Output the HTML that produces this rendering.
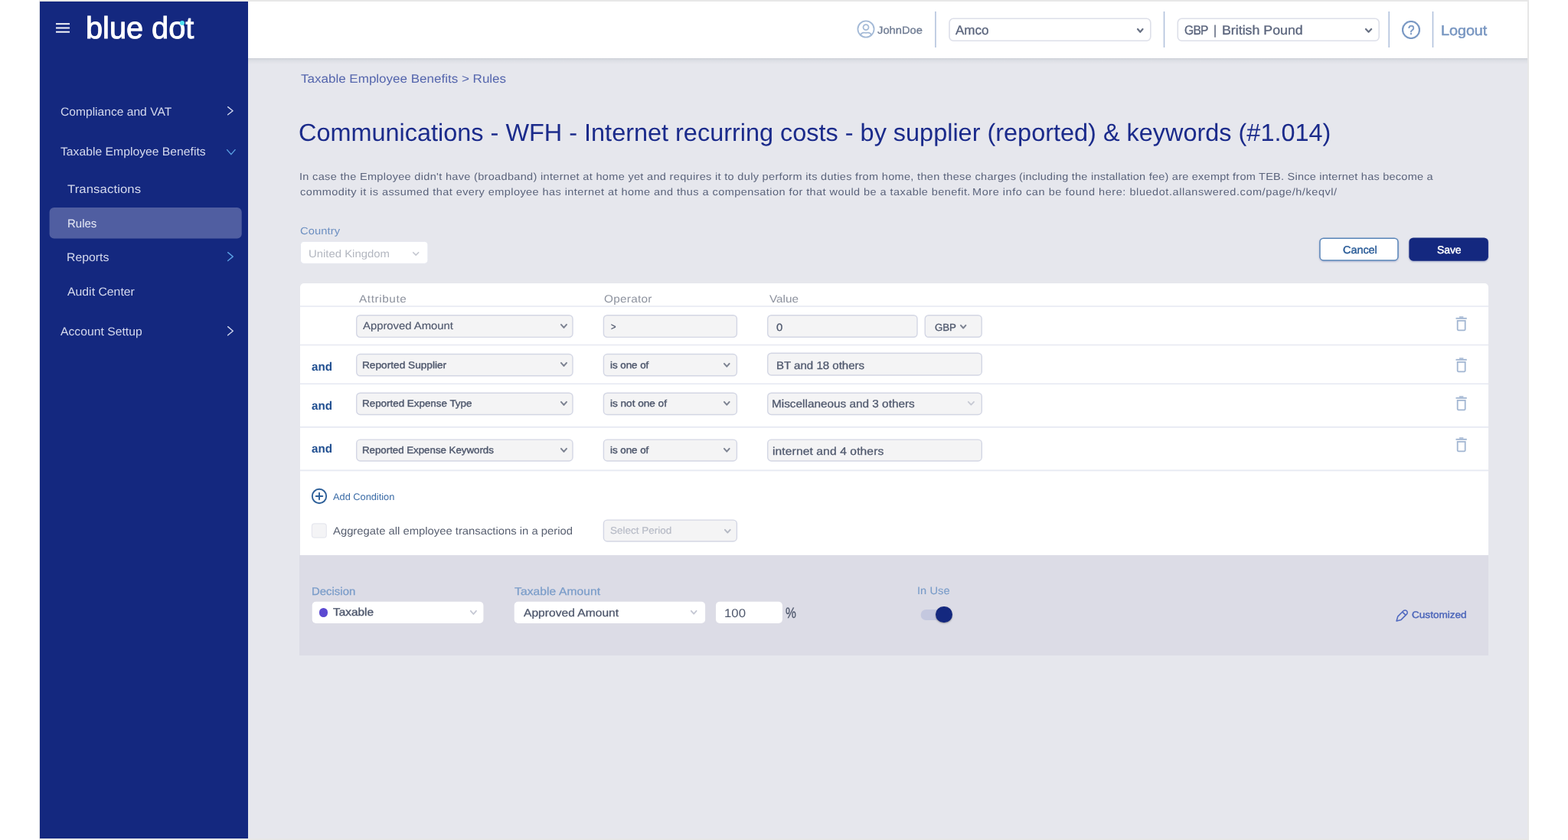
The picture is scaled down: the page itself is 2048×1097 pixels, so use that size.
<!DOCTYPE html>
<html lang="en">
<head>
<meta charset="utf-8">
<title>blue dot - Taxable Employee Benefits - Rules</title>
<style>
*{box-sizing:border-box}
html,body{margin:0;padding:0}
body{width:2048px;height:1097px;position:relative;overflow:hidden;background:#fff;font-family:"Liberation Sans", sans-serif}
main,header,aside{position:absolute;left:0;top:0;width:2048px;height:1097px;display:block;will-change:transform}
ul,li,p,h1,form,fieldset{margin:0;padding:0;border:0;list-style:none;font-weight:400}
a{color:inherit;text-decoration:none}
button{all:unset}
.b{position:absolute;display:block;margin:0;padding:0}
.t{position:absolute;display:block;margin:0;padding:0;white-space:nowrap;font-weight:400;text-rendering:geometricPrecision;transform-origin:0 0}
.in{background:#f4f4f5;border:1px solid #d4d7e5;border-radius:5px;box-shadow:inset 0 0 0 1px rgba(212,215,229,.38)}
.wh{background:#fff;border-radius:5px}
.hs{background:#fff;border:1.5px solid #dadded;border-radius:6px}
</style>
</head>
<body>
<div class="b" style="left:51px;top:0px;width:1946px;height:1097px;background:#e7e7e7"></div>
<div class="b" style="left:52px;top:2px;width:1943px;height:1093px;background:#e6e7ed"></div>
<main>
<nav aria-label="Breadcrumb">
<span class="t" style="left:393px;top:94px;font-size:15.66px;line-height:20px;transform:scaleX(1.0866);color:#5566ad;">Taxable Employee Benefits &gt; Rules</span>
</nav>
<h1 class="t" style="left:390px;top:153px;font-size:32.0px;line-height:40px;letter-spacing:-0.004px;transform:scaleX(1.0139);color:#1b2b8b;">Communications - WFH - Internet recurring costs - by supplier (reported) &amp; keywords (#1.014)</h1>
<p>
<span class="t" style="left:391px;top:222px;font-size:13.18px;line-height:17px;letter-spacing:0.303px;transform:scaleX(1.1000);color:#5b647c;">In case the Employee didn&#x27;t have (broadband) internet at home yet and requires it to duly perform its duties from home, then these charges </span><span class="t" style="left:1331px;top:222px;font-size:13.18px;line-height:17px;letter-spacing:0.225px;transform:scaleX(1.1000);color:#5b647c;">(including the installation fee) are exempt from TEB. Since internet has become a</span><span class="t" style="left:392px;top:242px;font-size:13.18px;line-height:17px;letter-spacing:0.401px;transform:scaleX(1.1000);color:#5b647c;">commodity it is assumed that every employee has internet at home and thus a compensation for that would be a taxable benefit. </span><span class="t" style="left:1270px;top:242px;font-size:13.18px;line-height:17px;letter-spacing:0.508px;transform:scaleX(1.1000);color:#5b647c;">More info can be found here: bluedot.allanswered.com/page/h/keqvl/</span>
</p>
<div role="toolbar">
<label>
<span class="t" style="left:392px;top:293px;font-size:13.37px;line-height:17px;letter-spacing:0.103px;transform:scaleX(1.1000);color:#6c8fc1;">Country</span>
</label>
<div role="combobox" aria-label="Country">
<svg class="b" style="left:392px;top:314px" width="168" height="31" viewBox="0 0 168 31"><rect x="0.50" y="1.30" width="166.40" height="29.00" rx="4.50" fill="#ffffff" stroke="#e4e6ee" stroke-width="1"/></svg>
<span class="t" style="left:403px;top:323px;font-size:13.75px;line-height:18px;letter-spacing:-0.008px;transform:scaleX(1.0839);color:#b3b7c0;">United Kingdom</span>
<svg class="b" style="left:535.60px;top:326.30px" width="14.4" height="10.9" viewBox="0 0 14.4 10.9" fill="none" ><path d="M3.72 3.72 L7.20 7.18 L10.68 3.72" stroke="#c4c7d0" stroke-width="1.6" stroke-linecap="round" stroke-linejoin="round"/></svg>
</div>
<button type="button">
<svg class="b" style="left:1719px;top:306px;filter:drop-shadow(0 1px 1.2px rgba(20,40,128,.28))" width="112" height="39" viewBox="0 0 112 39"><rect x="4.95" y="5.15" width="102.00" height="28.80" rx="4.75" fill="#ffffff" stroke="#5a86b9" stroke-width="1.5"/></svg>
<span class="t" style="left:1754px;top:317px;font-size:13.94px;line-height:18px;letter-spacing:-0.045px;-webkit-text-stroke:0.45px;transform:scaleX(1.0383);color:#2a5c98;">Cancel</span>
</button>
<button type="submit">
<svg class="b" style="left:1836px;top:306px;filter:drop-shadow(0 1px 1.2px rgba(20,40,128,.35))" width="112" height="39" viewBox="0 0 112 39"><rect x="4.40" y="4.40" width="103.50" height="30.30" rx="5.50" fill="#14287f"/></svg>
<span class="t" style="left:1877px;top:317px;font-size:13.94px;line-height:18px;letter-spacing:-0.093px;-webkit-text-stroke:0.45px;transform:scaleX(1.0017);color:#ffffff;">Save</span>
</button>
</div>
<section aria-label="Conditions">
<div class="b" style="left:392px;top:370px;width:1552px;height:355px;background:#fff;border-radius:5px 5px 0 0"></div>
<div role="row">
<span class="t" style="left:469px;top:381px;font-size:13.94px;line-height:18px;letter-spacing:0.533px;transform:scaleX(1.1000);color:#8d929e;">Attribute</span><span class="t" style="left:789px;top:381px;font-size:13.94px;line-height:18px;letter-spacing:0.248px;transform:scaleX(1.1000);color:#8d929e;">Operator</span><span class="t" style="left:1005px;top:381px;font-size:13.94px;line-height:18px;letter-spacing:0.017px;transform:scaleX(1.0982);color:#8d929e;">Value</span>
</div>
<hr class="b" style="left:392px;top:399px;width:1552px;height:2px;border:0;background:linear-gradient(#eceef5 0px 1px,#eceef5 1px 2px)">
<hr class="b" style="left:392px;top:449px;width:1552px;height:3px;border:0;background:linear-gradient(#fafafc 0px 1px,#e4e7f1 1px 2px,#fafafc 2px 3px)">
<hr class="b" style="left:392px;top:500px;width:1552px;height:2px;border:0;background:linear-gradient(#f4f5f9 0px 1px,#e4e7f1 1px 2px)">
<hr class="b" style="left:392px;top:556px;width:1552px;height:3px;border:0;background:linear-gradient(#fcfdfe 0px 1px,#e6e9f2 1px 2px,#eef0f6 2px 3px)">
<hr class="b" style="left:392px;top:613px;width:1552px;height:3px;border:0;background:linear-gradient(#f2f4f8 0px 1px,#e6e9f2 1px 2px,#f8f8fb 2px 3px)">
<div role="row">
<div role="combobox" aria-label="Attribute">
<svg class="b" style="left:465px;top:411px" width="284" height="31" viewBox="0 0 284 31"><rect x="0.70" y="0.70" width="282.30" height="28.70" rx="4.80" fill="#f4f4f5" stroke="#d3d6e4" stroke-width="1.4"/></svg>
<span class="t" style="left:474px;top:417px;font-size:13.75px;line-height:18px;letter-spacing:0.004px;-webkit-text-stroke:0.15px;transform:scaleX(1.0788);color:#4f586d;">Approved Amount</span>
<svg class="b" style="left:729.10px;top:419.75px" width="14.9" height="11.8" viewBox="0 0 14.9 11.8" fill="none" ><path d="M3.90 3.90 L7.45 7.90 L11.00 3.90" stroke="#7d8392" stroke-width="2.0" stroke-linecap="round" stroke-linejoin="round"/></svg>
</div>
<div role="combobox" aria-label="Operator">
<svg class="b" style="left:787px;top:411px" width="177" height="31" viewBox="0 0 177 31"><rect x="1.40" y="0.70" width="174.00" height="28.70" rx="4.80" fill="#f4f4f5" stroke="#d3d6e4" stroke-width="1.4"/></svg>
<span class="t" style="left:798px;top:419px;font-size:12.8px;line-height:16px;-webkit-text-stroke:0.3px;transform:scaleX(0.8766);color:#4f586d;">&gt;</span>
</div>
<div role="textbox" aria-label="Value">
<svg class="b" style="left:1002px;top:411px" width="197" height="30" viewBox="0 0 197 30"><rect x="0.70" y="0.70" width="195.30" height="28.60" rx="4.80" fill="#f4f4f5" stroke="#d3d6e4" stroke-width="1.4"/></svg>
<span class="t" style="left:1014px;top:419px;font-size:13.56px;line-height:17px;-webkit-text-stroke:0.3px;transform:scaleX(1.0953);color:#4f586d;">0</span>
</div>
<div role="combobox" aria-label="Currency">
<svg class="b" style="left:1207px;top:411px" width="76" height="30" viewBox="0 0 76 30"><rect x="1.20" y="0.70" width="74.00" height="28.60" rx="4.80" fill="#f4f4f5" stroke="#d3d6e4" stroke-width="1.4"/></svg>
<span class="t" style="left:1221px;top:419px;font-size:13.18px;line-height:17px;letter-spacing:-0.058px;-webkit-text-stroke:0.3px;transform:scaleX(1.0109);color:#4f586d;">GBP</span>
<svg class="b" style="left:1251.00px;top:421.20px" width="14.3" height="11.4" viewBox="0 0 14.3 11.4" fill="none" ><path d="M3.90 3.90 L7.15 7.50 L10.40 3.90" stroke="#7d8392" stroke-width="2.0" stroke-linecap="round" stroke-linejoin="round"/></svg>
</div>
<button type="button" aria-label="Delete condition">
<svg class="b" style="left:1899.00px;top:410.70px" width="20" height="24" viewBox="0 0 20 24" fill="none" ><path d="M2.5 4.8 H16.8" stroke="#a2b6d2" stroke-width="1.9"/><path d="M7 3 H12.4" stroke="#a2b6d2" stroke-width="1.5"/><path d="M4.7 7.8 H14.7 V19.1 a1.2 1.2 0 0 1 -1.2 1.2 H5.9 a1.2 1.2 0 0 1 -1.2 -1.2 Z" stroke="#a2b6d2" stroke-width="1.8" stroke-linejoin="miter"/></svg>
</button>
</div>
<div role="row">
<span class="t" style="left:407px;top:470px;font-size:15.47px;line-height:20px;letter-spacing:-0.016px;font-weight:700;transform:scaleX(0.9787);color:#1f4e90;">and</span>
<div role="combobox" aria-label="Attribute">
<svg class="b" style="left:465px;top:461px" width="284" height="31" viewBox="0 0 284 31"><rect x="0.70" y="1.50" width="282.30" height="28.30" rx="4.80" fill="#f4f4f5" stroke="#d3d6e4" stroke-width="1.4"/></svg>
<span class="t" style="left:473px;top:469px;font-size:12.6px;line-height:16px;letter-spacing:-0.002px;-webkit-text-stroke:0.4px;transform:scaleX(1.0857);color:#4f586d;">Reported Supplier</span>
<svg class="b" style="left:729.10px;top:470.35px" width="14.9" height="11.8" viewBox="0 0 14.9 11.8" fill="none" ><path d="M3.90 3.90 L7.45 7.90 L11.00 3.90" stroke="#7d8392" stroke-width="2.0" stroke-linecap="round" stroke-linejoin="round"/></svg>
</div>
<div role="combobox" aria-label="Operator">
<svg class="b" style="left:787px;top:461px" width="177" height="31" viewBox="0 0 177 31"><rect x="1.40" y="1.50" width="174.00" height="28.30" rx="4.80" fill="#f4f4f5" stroke="#d3d6e4" stroke-width="1.4"/></svg>
<span class="t" style="left:797px;top:469px;font-size:12.6px;line-height:16px;letter-spacing:-0.043px;-webkit-text-stroke:0.4px;transform:scaleX(1.0631);color:#4f586d;">is one of</span>
<svg class="b" style="left:942.20px;top:470.65px" width="14.55" height="11.6" viewBox="0 0 14.55 11.6" fill="none" ><path d="M3.90 3.90 L7.27 7.70 L10.65 3.90" stroke="#7d8392" stroke-width="2.0" stroke-linecap="round" stroke-linejoin="round"/></svg>
</div>
<div role="combobox" aria-label="Value">
<svg class="b" style="left:1002px;top:460px" width="281" height="31" viewBox="0 0 281 31"><rect x="0.70" y="1.20" width="279.60" height="28.80" rx="4.80" fill="#f4f4f5" stroke="#d3d6e4" stroke-width="1.4"/></svg>
<span class="t" style="left:1014px;top:468px;font-size:14.13px;line-height:18px;letter-spacing:0.009px;-webkit-text-stroke:0.3px;transform:scaleX(1.0634);color:#4f586d;">BT and 18 others</span>
</div>
<button type="button" aria-label="Delete condition">
<svg class="b" style="left:1899.00px;top:464.60px" width="20" height="24" viewBox="0 0 20 24" fill="none" ><path d="M2.5 4.8 H16.8" stroke="#a2b6d2" stroke-width="1.9"/><path d="M7 3 H12.4" stroke="#a2b6d2" stroke-width="1.5"/><path d="M4.7 7.8 H14.7 V19.1 a1.2 1.2 0 0 1 -1.2 1.2 H5.9 a1.2 1.2 0 0 1 -1.2 -1.2 Z" stroke="#a2b6d2" stroke-width="1.8" stroke-linejoin="miter"/></svg>
</button>
</div>
<div role="row">
<span class="t" style="left:407px;top:521px;font-size:15.47px;line-height:20px;letter-spacing:-0.016px;font-weight:700;transform:scaleX(0.9787);color:#1f4e90;">and</span>
<div role="combobox" aria-label="Attribute">
<svg class="b" style="left:465px;top:512px" width="284" height="31" viewBox="0 0 284 31"><rect x="0.70" y="1.20" width="282.30" height="28.30" rx="4.80" fill="#f4f4f5" stroke="#d3d6e4" stroke-width="1.4"/></svg>
<span class="t" style="left:473px;top:519px;font-size:12.6px;line-height:16px;letter-spacing:-0.007px;-webkit-text-stroke:0.4px;transform:scaleX(1.0647);color:#4f586d;">Reported Expense Type</span>
<svg class="b" style="left:729.10px;top:521.05px" width="14.9" height="11.8" viewBox="0 0 14.9 11.8" fill="none" ><path d="M3.90 3.90 L7.45 7.90 L11.00 3.90" stroke="#7d8392" stroke-width="2.0" stroke-linecap="round" stroke-linejoin="round"/></svg>
</div>
<div role="combobox" aria-label="Operator">
<svg class="b" style="left:787px;top:512px" width="177" height="31" viewBox="0 0 177 31"><rect x="1.40" y="1.20" width="174.00" height="28.30" rx="4.80" fill="#f4f4f5" stroke="#d3d6e4" stroke-width="1.4"/></svg>
<span class="t" style="left:797px;top:519px;font-size:12.6px;line-height:16px;letter-spacing:-0.007px;-webkit-text-stroke:0.4px;transform:scaleX(1.0789);color:#4f586d;">is not one of</span>
<svg class="b" style="left:942.20px;top:521.35px" width="14.55" height="11.6" viewBox="0 0 14.55 11.6" fill="none" ><path d="M3.90 3.90 L7.27 7.70 L10.65 3.90" stroke="#7d8392" stroke-width="2.0" stroke-linecap="round" stroke-linejoin="round"/></svg>
</div>
<div role="combobox" aria-label="Value">
<svg class="b" style="left:1002px;top:512px" width="281" height="31" viewBox="0 0 281 31"><rect x="0.70" y="1.20" width="279.60" height="28.30" rx="4.80" fill="#f4f4f5" stroke="#d3d6e4" stroke-width="1.4"/></svg>
<span class="t" style="left:1008px;top:518px;font-size:14.13px;line-height:18px;letter-spacing:0.012px;-webkit-text-stroke:0.3px;transform:scaleX(1.0840);color:#4f586d;">Miscellaneous and 3 others</span>
<svg class="b" style="left:1260.70px;top:521.20px" width="14.8" height="11.4" viewBox="0 0 14.8 11.4" fill="none" ><path d="M3.81 3.81 L7.40 7.59 L10.99 3.81" stroke="#c6c9d3" stroke-width="1.8" stroke-linecap="round" stroke-linejoin="round"/></svg>
</div>
<button type="button" aria-label="Delete condition">
<svg class="b" style="left:1899.00px;top:514.60px" width="20" height="24" viewBox="0 0 20 24" fill="none" ><path d="M2.5 4.8 H16.8" stroke="#a2b6d2" stroke-width="1.9"/><path d="M7 3 H12.4" stroke="#a2b6d2" stroke-width="1.5"/><path d="M4.7 7.8 H14.7 V19.1 a1.2 1.2 0 0 1 -1.2 1.2 H5.9 a1.2 1.2 0 0 1 -1.2 -1.2 Z" stroke="#a2b6d2" stroke-width="1.8" stroke-linejoin="miter"/></svg>
</button>
</div>
<div role="row">
<span class="t" style="left:407px;top:577px;font-size:15.47px;line-height:20px;letter-spacing:-0.016px;font-weight:700;transform:scaleX(0.9787);color:#1f4e90;">and</span>
<div role="combobox" aria-label="Attribute">
<svg class="b" style="left:465px;top:573px" width="284" height="30" viewBox="0 0 284 30"><rect x="0.70" y="1.10" width="282.30" height="27.90" rx="4.80" fill="#f4f4f5" stroke="#d3d6e4" stroke-width="1.4"/></svg>
<span class="t" style="left:473px;top:580px;font-size:12.6px;line-height:16px;letter-spacing:-0.012px;-webkit-text-stroke:0.4px;transform:scaleX(1.0554);color:#4f586d;">Reported Expense Keywords</span>
<svg class="b" style="left:729.10px;top:581.75px" width="14.9" height="11.8" viewBox="0 0 14.9 11.8" fill="none" ><path d="M3.90 3.90 L7.45 7.90 L11.00 3.90" stroke="#7d8392" stroke-width="2.0" stroke-linecap="round" stroke-linejoin="round"/></svg>
</div>
<div role="combobox" aria-label="Operator">
<svg class="b" style="left:787px;top:573px" width="177" height="30" viewBox="0 0 177 30"><rect x="1.40" y="1.10" width="174.00" height="27.90" rx="4.80" fill="#f4f4f5" stroke="#d3d6e4" stroke-width="1.4"/></svg>
<span class="t" style="left:797px;top:580px;font-size:12.6px;line-height:16px;letter-spacing:-0.043px;-webkit-text-stroke:0.4px;transform:scaleX(1.0631);color:#4f586d;">is one of</span>
<svg class="b" style="left:942.20px;top:582.05px" width="14.55" height="11.6" viewBox="0 0 14.55 11.6" fill="none" ><path d="M3.90 3.90 L7.27 7.70 L10.65 3.90" stroke="#7d8392" stroke-width="2.0" stroke-linecap="round" stroke-linejoin="round"/></svg>
</div>
<div role="combobox" aria-label="Value">
<svg class="b" style="left:1002px;top:573px" width="281" height="30" viewBox="0 0 281 30"><rect x="0.70" y="1.10" width="279.60" height="27.90" rx="4.80" fill="#f4f4f5" stroke="#d3d6e4" stroke-width="1.4"/></svg>
<span class="t" style="left:1009px;top:580px;font-size:14.13px;line-height:18px;letter-spacing:0.122px;-webkit-text-stroke:0.3px;transform:scaleX(1.1000);color:#4f586d;">internet and 4 others</span>
</div>
<button type="button" aria-label="Delete condition">
<svg class="b" style="left:1899.00px;top:568.80px" width="20" height="24" viewBox="0 0 20 24" fill="none" ><path d="M2.5 4.8 H16.8" stroke="#a2b6d2" stroke-width="1.9"/><path d="M7 3 H12.4" stroke="#a2b6d2" stroke-width="1.5"/><path d="M4.7 7.8 H14.7 V19.1 a1.2 1.2 0 0 1 -1.2 1.2 H5.9 a1.2 1.2 0 0 1 -1.2 -1.2 Z" stroke="#a2b6d2" stroke-width="1.8" stroke-linejoin="miter"/></svg>
</button>
</div>
<button type="button">
<svg class="b" style="left:404.55px;top:636.40px" width="24" height="24" viewBox="0 0 24 24" fill="none" ><circle cx="12" cy="12" r="9.2" stroke="#2e6099" stroke-width="1.9"/><path d="M7.7 12 H16.3 M12 7.7 V16.3" stroke="#2e6099" stroke-width="1.9" stroke-linecap="round"/></svg>
<span class="t" style="left:435px;top:641px;font-size:12.41px;line-height:16px;letter-spacing:-0.016px;transform:scaleX(1.0330);color:#3a6ba6;">Add Condition</span>
</button>
<label>
<svg class="b" style="left:406px;top:683px" width="21" height="20" viewBox="0 0 21 20"><rect x="1.40" y="0.80" width="18.90" height="18.40" rx="3.40" fill="#f4f4f6" stroke="#e6e7ee" stroke-width="1.2"/></svg>
<span class="t" style="left:435px;top:684px;font-size:13.94px;line-height:18px;letter-spacing:-0.006px;transform:scaleX(1.0640);color:#596071;">Aggregate all employee transactions in a period</span>
</label>
<div role="combobox" aria-label="Period" aria-disabled="true">
<svg class="b" style="left:787px;top:678px" width="177" height="30" viewBox="0 0 177 30"><rect x="1.40" y="1.10" width="174.00" height="27.90" rx="4.80" fill="#f4f4f5" stroke="#d3d6e4" stroke-width="1.4"/></svg>
<span class="t" style="left:797px;top:685px;font-size:12.8px;line-height:16px;letter-spacing:0.008px;-webkit-text-stroke:0.2px;transform:scaleX(1.0543);color:#b7bbc6;">Select Period</span>
<svg class="b" style="left:943.10px;top:688.00px" width="14.6" height="11.5" viewBox="0 0 14.6 11.5" fill="none" ><path d="M3.90 3.90 L7.30 7.60 L10.70 3.90" stroke="#b5b9c4" stroke-width="2.0" stroke-linecap="round" stroke-linejoin="round"/></svg>
</div>
</section>
<section aria-label="Decision">
<div class="b" style="left:391px;top:725px;width:1553px;height:131px;background:#dcdce6"></div>
<label>
<span class="t" style="left:407px;top:763px;font-size:14.13px;line-height:18px;letter-spacing:0.019px;-webkit-text-stroke:0.3px;transform:scaleX(1.0537);color:#7b9dc9;">Decision</span>
</label>
<div role="combobox" aria-label="Decision">
<svg class="b" style="left:407px;top:785px" width="225" height="29" viewBox="0 0 225 29"><rect x="0.70" y="0.70" width="223.70" height="28.30" rx="5.00" fill="#ffffff"/></svg>
<div class="b" style="left:416.50px;top:794.00px;width:11.80px;height:11.80px;background:#5b49d1;border-radius:50%"></div>
<span class="t" style="left:435px;top:790px;font-size:14.13px;line-height:18px;letter-spacing:0.027px;-webkit-text-stroke:0.4px;transform:scaleX(1.0847);color:#4f586d;">Taxable</span>
<svg class="b" style="left:610.80px;top:794.40px" width="14.8" height="11.8" viewBox="0 0 14.8 11.8" fill="none" ><path d="M3.81 3.81 L7.40 7.99 L10.99 3.81" stroke="#c5c8d4" stroke-width="1.8" stroke-linecap="round" stroke-linejoin="round"/></svg>
</div>
<label>
<span class="t" style="left:672px;top:763px;font-size:14.13px;line-height:18px;letter-spacing:0.104px;-webkit-text-stroke:0.3px;transform:scaleX(1.1000);color:#7b9dc9;">Taxable Amount</span>
</label>
<div role="combobox" aria-label="Taxable Amount">
<svg class="b" style="left:671px;top:785px" width="251" height="29" viewBox="0 0 251 29"><rect x="0.70" y="0.70" width="249.40" height="28.30" rx="5.00" fill="#ffffff"/></svg>
<span class="t" style="left:684px;top:791px;font-size:14.13px;line-height:18px;letter-spacing:0.037px;-webkit-text-stroke:0.3px;transform:scaleX(1.1000);color:#4f586d;">Approved Amount</span>
<svg class="b" style="left:898.60px;top:794.40px" width="14.4" height="11.5" viewBox="0 0 14.4 11.5" fill="none" ><path d="M3.81 3.81 L7.20 7.69 L10.59 3.81" stroke="#c5c8d4" stroke-width="1.8" stroke-linecap="round" stroke-linejoin="round"/></svg>
</div>
<div role="textbox" aria-label="Percent">
<svg class="b" style="left:935px;top:785px" width="87" height="29" viewBox="0 0 87 29"><rect x="0.00" y="0.70" width="86.90" height="28.30" rx="5.00" fill="#ffffff"/></svg>
<span class="t" style="left:946px;top:792px;font-size:15.47px;line-height:20px;letter-spacing:0.038px;transform:scaleX(1.0823);color:#4f586d;">100</span>
<span class="t" style="left:1026px;top:789px;font-size:19.5px;line-height:25px;-webkit-text-stroke:0.3px;transform:scaleX(0.8000);color:#4f586d;">%</span>
</div>
<label>
<span class="t" style="left:1198px;top:763px;font-size:13.75px;line-height:18px;letter-spacing:0.061px;-webkit-text-stroke:0.15px;transform:scaleX(1.0618);color:#7b9dc9;">In Use</span>
</label>
<div role="switch" aria-checked="true" aria-label="In Use">
<svg class="b" style="left:1202px;top:796px" width="39" height="14" viewBox="0 0 39 14"><rect x="0.60" y="0.00" width="38.00" height="14.00" rx="7.00" fill="#c4c8df"/></svg>
<div class="b" style="left:1222.20px;top:791.60px;width:21.40px;height:21.40px;background:#14287f;border-radius:50%;box-shadow:0 1px 2px rgba(0,0,0,.35)"></div>
</div>
<div>
<svg class="b" style="left:1812.00px;top:784.00px" width="40" height="40" viewBox="0 0 40 40" fill="none" ><path d="M12.1 27.0 L13.7 21.1 L21.0 13.8 A3.0 3.0 0 0 1 25.3 18.1 L18.0 25.4 Z M19.7 15.1 L24.0 19.4" stroke="#5069c0" stroke-width="1.55" stroke-linejoin="round" stroke-linecap="round"/></svg>
<span class="t" style="left:1844px;top:795px;font-size:12.41px;line-height:16px;letter-spacing:-0.010px;-webkit-text-stroke:0.4px;transform:scaleX(1.0959);color:#4a64b9;">Customized</span>
</div>
</section>
</main>
<header>
<div class="b" style="left:324px;top:76px;width:1671px;height:8px;background:linear-gradient(#ced1d8,#dddfe5 40%,#e6e7ed)"></div>
<div class="b" style="left:324px;top:2px;width:1671px;height:74px;background:#fff"></div>
<div>
<svg class="b" style="left:1118.60px;top:25.80px" width="24" height="24" viewBox="0 0 24 24" fill="none" ><circle cx="12" cy="12" r="10.6" stroke="#a4bad7" stroke-width="1.8"/><circle cx="12" cy="9.6" r="3.5" stroke="#a4bad7" stroke-width="1.8"/><path d="M4.9 19.6 C6.2 16.6 9 16.2 12 17 C15 16.2 17.8 16.6 19.1 19.6" stroke="#a4bad7" stroke-width="1.8" stroke-linecap="round"/></svg>
<span class="t" style="left:1146px;top:31px;font-size:13.56px;line-height:17px;letter-spacing:0.048px;-webkit-text-stroke:0.35px;transform:scaleX(1.0815);color:#6f7c93;">JohnDoe</span>
</div>
<div class="b" style="left:1221px;top:15px;width:2px;height:47px;background:linear-gradient(90deg,#bac9e0 0px 1px,#cad5e7 1px 2px)"></div>
<div class="b" style="left:1519px;top:15px;width:3px;height:47px;background:linear-gradient(90deg,#ebeff6 0px 1px,#aebfda 1px 2px,#ebeff6 2px 3px)"></div>
<div class="b" style="left:1813px;top:15px;width:2px;height:47px;background:linear-gradient(90deg,#d2dceb 0px 1px,#b2c2dc 1px 2px)"></div>
<div class="b" style="left:1870px;top:15px;width:3px;height:47px;background:linear-gradient(90deg,#ebeff6 0px 1px,#aebfda 1px 2px,#ebeff6 2px 3px)"></div>
<div role="combobox" aria-label="Company">
<svg class="b" style="left:1239px;top:23px" width="265" height="32" viewBox="0 0 265 32"><rect x="1.00" y="1.30" width="262.80" height="29.00" rx="5.20" fill="#ffffff" stroke="#dddfe9" stroke-width="1.6"/></svg>
<span class="t" style="left:1248px;top:29px;font-size:16.8px;line-height:21px;letter-spacing:-0.008px;-webkit-text-stroke:0.3px;transform:scaleX(1.0143);color:#5a647c;">Amco</span>
<svg class="b" style="left:1482.00px;top:33.70px" width="14.5" height="11.8" viewBox="0 0 14.5 11.8" fill="none" ><path d="M3.99 3.99 L7.25 7.81 L10.51 3.99" stroke="#687184" stroke-width="2.2" stroke-linecap="round" stroke-linejoin="round"/></svg>
</div>
<div role="combobox" aria-label="Currency">
<svg class="b" style="left:1537px;top:23px" width="265" height="32" viewBox="0 0 265 32"><rect x="1.30" y="1.30" width="262.90" height="29.00" rx="5.20" fill="#ffffff" stroke="#dddfe9" stroke-width="1.6"/></svg>
<span class="t" style="left:1547px;top:29px;font-size:16.8px;line-height:21px;letter-spacing:-0.793px;-webkit-text-stroke:0.3px;transform:scaleX(0.9300);color:#5a647c;">GBP </span><span class="t" style="left:1585px;top:29px;font-size:16.8px;line-height:21px;letter-spacing:-1.369px;-webkit-text-stroke:0.3px;transform:scaleX(0.9300);color:#5a647c;">| </span><span class="t" style="left:1596px;top:29px;font-size:16.8px;line-height:21px;letter-spacing:0.005px;-webkit-text-stroke:0.3px;transform:scaleX(1.0584);color:#5a647c;">British Pound</span>
<svg class="b" style="left:1780.20px;top:33.70px" width="15.1" height="11.8" viewBox="0 0 15.1 11.8" fill="none" ><path d="M3.99 3.99 L7.55 7.81 L11.11 3.99" stroke="#687184" stroke-width="2.2" stroke-linecap="round" stroke-linejoin="round"/></svg>
</div>
<a href="#" aria-label="Help">
<svg class="b" style="left:1830.90px;top:26.70px" width="24" height="24" viewBox="0 0 24 24" fill="none" ><circle cx="12" cy="12" r="11.0" stroke="#7a99c4" stroke-width="2.2"/></svg>
<span class="t" style="left:1839px;top:29px;font-size:17.0px;line-height:22px;-webkit-text-stroke:0.55px;transform:scaleX(0.8956);color:#7a99c4;">?</span>
</a>
<a href="#">
<span class="t" style="left:1882px;top:28px;font-size:18.4px;line-height:23px;-webkit-text-stroke:0.5px;transform:scaleX(1.0724);color:#7896c1;">Logout</span>
</a>
</header>
<aside>
<div class="b" style="left:52px;top:2px;width:272px;height:1093px;background:#14287f"></div>
<button type="button" aria-label="Menu">
<span class="b" style="left:73px;top:30px;width:18px;height:3px;border:0;background:linear-gradient(#c4c9df 0px 1px,#ffffff 1px 2px,#374892 2px 3px)"></span>
<span class="b" style="left:73px;top:35px;width:18px;height:3px;border:0;background:linear-gradient(#7e89b9 0px 1px,#ffffff 1px 2px,#7e89b9 2px 3px)"></span>
<span class="b" style="left:73px;top:40px;width:18px;height:3px;border:0;background:linear-gradient(#4f5e9f 0px 1px,#ffffff 1px 2px,#adb4d2 2px 3px)"></span>
</button>
<a href="#">
<span class="t" style="left:112px;top:12px;font-size:40.0px;line-height:50px;letter-spacing:-0.027px;-webkit-text-stroke:0.9px;transform:scaleX(0.9938);color:#ffffff;">blue dot</span>
<div class="b" style="left:234.60px;top:27.20px;width:6.00px;height:6.00px;background:#4fe0f0;border-radius:50%"></div>
</a>
<nav aria-label="Main">
<ul>
<li>
<a href="#">
<span class="t" style="left:79px;top:137px;font-size:15.2px;line-height:19px;letter-spacing:0.005px;transform:scaleX(1.0270);color:#d4d9ed;">Compliance and VAT</span>
<svg class="b" style="left:294.40px;top:136.30px" width="13.7" height="17.4" viewBox="0 0 13.7 17.4" fill="none" ><path d="M3.63 3.63 L10.07 8.70 L3.63 13.77" stroke="#d4d9ed" stroke-width="1.4" stroke-linecap="round" stroke-linejoin="round"/></svg>
</a>
</li>
<li>
<a href="#">
<span class="t" style="left:79px;top:189px;font-size:15.2px;line-height:19px;letter-spacing:-0.003px;transform:scaleX(1.0358);color:#d4d9ed;">Taxable Employee Benefits</span>
<svg class="b" style="left:292.60px;top:191.70px" width="17.7" height="13.3" viewBox="0 0 17.7 13.3" fill="none" ><path d="M3.63 3.63 L8.85 9.67 L14.07 3.63" stroke="#5aa0e2" stroke-width="1.4" stroke-linecap="round" stroke-linejoin="round"/></svg>
</a>
<ul>
<li>
<a href="#">
<span class="t" style="left:88px;top:238px;font-size:15.2px;line-height:19px;letter-spacing:0.088px;transform:scaleX(1.1000);color:#d4d9ed;">Transactions</span>
</a>
</li>
<li>
<a href="#" aria-current="page">
<svg class="b" style="left:64px;top:270px" width="252" height="42" viewBox="0 0 252 42"><rect x="0.60" y="0.90" width="251.10" height="40.70" rx="6.00" fill="#505ea1"/></svg>
<span class="t" style="left:88px;top:283px;font-size:15.2px;line-height:19px;letter-spacing:-0.018px;transform:scaleX(0.9902);color:#e6e9f5;">Rules</span>
</a>
</li>
<li>
<a href="#">
<span class="t" style="left:87px;top:327px;font-size:15.2px;line-height:19px;letter-spacing:-0.017px;transform:scaleX(1.0444);color:#d4d9ed;">Reports</span>
<svg class="b" style="left:294.30px;top:325.90px" width="13.9" height="18.2" viewBox="0 0 13.9 18.2" fill="none" ><path d="M3.63 3.63 L10.27 9.10 L3.63 14.57" stroke="#5a9fe2" stroke-width="1.4" stroke-linecap="round" stroke-linejoin="round"/></svg>
</a>
</li>
<li>
<a href="#">
<span class="t" style="left:88px;top:372px;font-size:15.2px;line-height:19px;letter-spacing:-0.007px;transform:scaleX(1.0414);color:#d4d9ed;">Audit Center</span>
</a>
</li>
</ul>
</li>
<li>
<a href="#">
<span class="t" style="left:79px;top:424px;font-size:15.2px;line-height:19px;letter-spacing:0.006px;transform:scaleX(1.0347);color:#d4d9ed;">Account Settup</span>
<svg class="b" style="left:294.30px;top:422.80px" width="13.9" height="18.4" viewBox="0 0 13.9 18.4" fill="none" ><path d="M3.63 3.63 L10.27 9.20 L3.63 14.77" stroke="#d4d9ed" stroke-width="1.4" stroke-linecap="round" stroke-linejoin="round"/></svg>
</a>
</li>
</ul>
</nav>
</aside>
</body>
</html>
